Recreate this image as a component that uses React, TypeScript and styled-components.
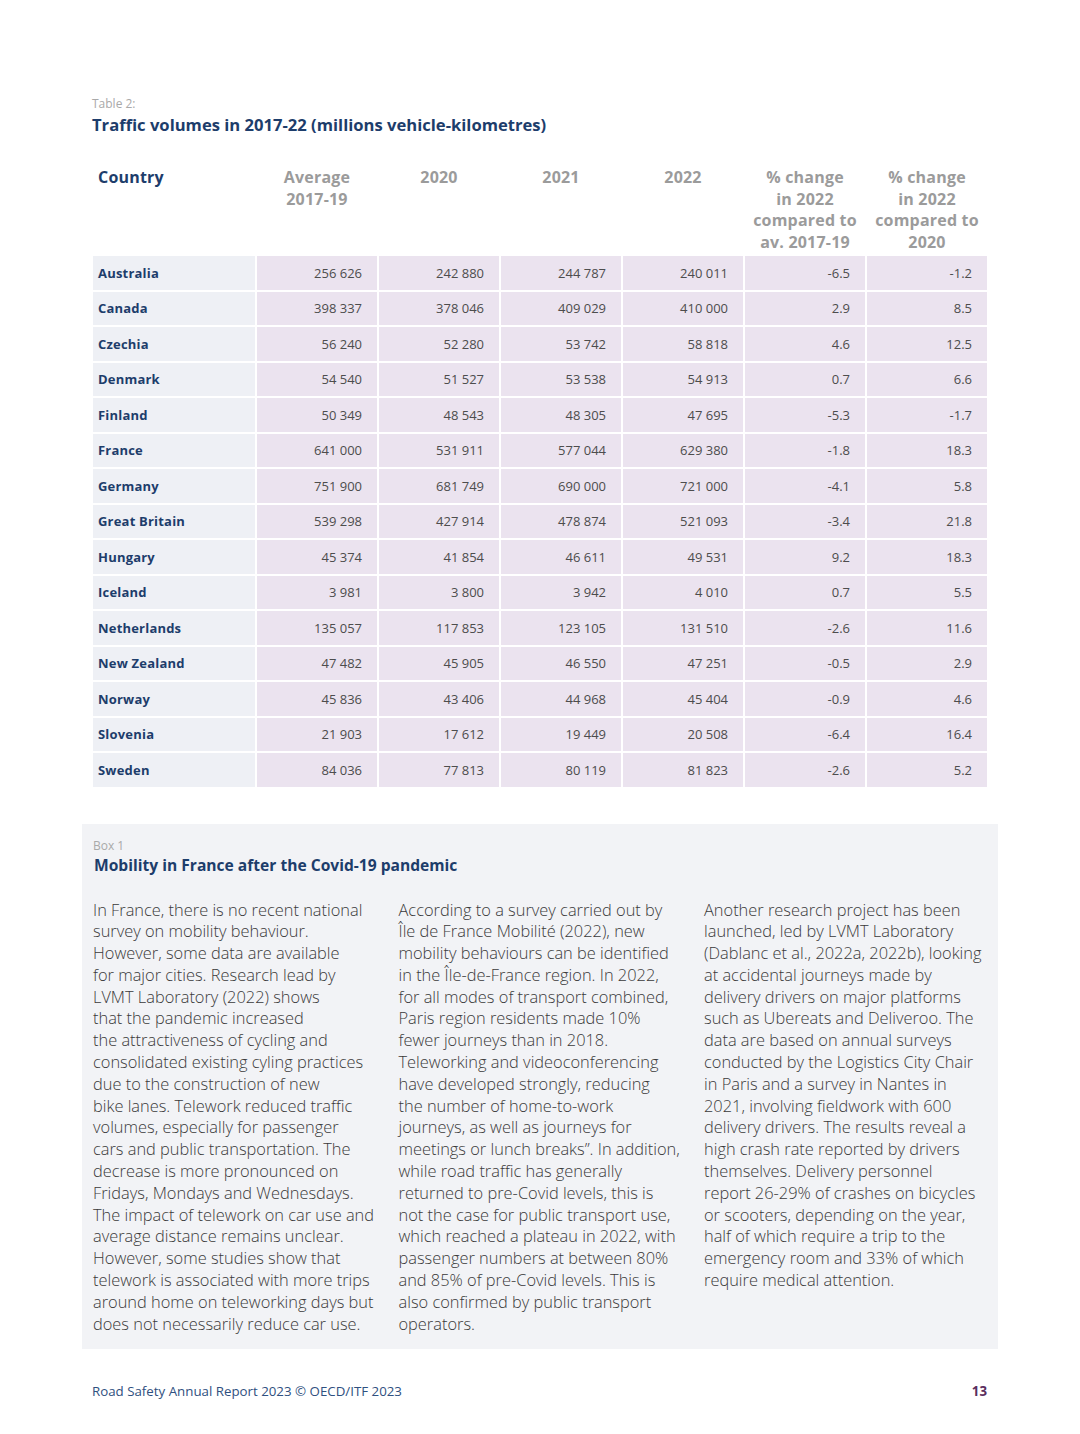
import React from "react";
import styled, { createGlobalStyle } from "styled-components";

const GlobalStyle = createGlobalStyle`
  html, body { margin: 0; padding: 0; background: #ffffff; }
  body { font-family: "Open Sans", "Noto Sans", sans-serif; }
`;

const Page = styled.div`
  width: 1080px;
  height: 1434px;
  box-sizing: border-box;
  padding-top: 96px;
  display: flex;
  flex-direction: column;
`;

const TableSection = styled.section`
  padding-left: 92px;
  display: flex;
  flex-direction: column;
`;

const Label = styled.div`
  font-size: 12px;
  line-height: 16px;
  color: #a9a9a9;
  font-weight: 400;
`;

const Title = styled.h2`
  margin: 2px 0 0 0;
  font-size: 16.6px;
  line-height: 22px;
  font-weight: 700;
  color: #1d3d6b;
`;

const Grid = styled.div`
  margin-top: 31px;
  margin-left: 1px;
  display: grid;
  grid-template-columns: 162px repeat(6, 120px);
  column-gap: 2px;
`;

const HeadCell = styled.div<{ $first?: boolean }>`
  font-size: 16px;
  line-height: 21.5px;
  font-weight: 700;
  color: ${(p) => (p.$first ? "#1d3d6b" : "#9b9b9b")};
  text-align: ${(p) => (p.$first ? "left" : "center")};
  padding-left: ${(p) => (p.$first ? "5px" : "0")};
  padding-bottom: 3px;
  letter-spacing: 0.2px;
`;

const Rows = styled.div`
  grid-column: 1 / -1;
  display: grid;
  grid-template-columns: subgrid;
  row-gap: 2px;
  grid-auto-rows: 33.5px;
`;

const CountryCell = styled.div`
  background: #eef0f5;
  display: flex;
  align-items: center;
  padding-left: 5px;
  font-size: 13px;
  font-weight: 700;
  color: #1d3d6b;
  letter-spacing: 0.2px;
`;

const ValueCell = styled.div`
  background: #ebe3ef;
  display: flex;
  align-items: center;
  justify-content: flex-end;
  padding-right: 15px;
  font-size: 13px;
  font-weight: 400;
  color: #4d4d4d;
`;

const Box = styled.section`
  margin: 37px 82px 0 82px;
  background: #f2f3f6;
  padding: 14px 5px 15px 11px;
  display: flex;
  flex-direction: column;
`;

const BoxTitle = styled.h3`
  margin: 0 0 0 1px;
  font-size: 15.6px;
  line-height: 22px;
  font-weight: 700;
  color: #1d3d6b;
`;

const Columns = styled.div`
  margin-top: 23px;
  display: grid;
  grid-template-columns: repeat(3, 290px);
  column-gap: 15.5px;
`;

const Para = styled.p`
  margin: 0;
  font-size: 16.4px;
  line-height: 21.8px;
  font-weight: 300;
  color: #3a3a3a;
  white-space: nowrap;
`;

const Footer = styled.footer`
  margin-top: 33px;
  padding: 0 93px 0 92px;
  display: flex;
  justify-content: space-between;
  align-items: center;
  font-size: 13.3px;
  line-height: 18px;
`;

const FooterText = styled.span`
  color: #2f5080;
  font-weight: 400;
`;

const PageNum = styled.span`
  color: #5a2e5e;
  font-weight: 700;
`;

const headers = [
  "Country",
  "Average\n2017-19",
  "2020",
  "2021",
  "2022",
  "% change\nin 2022\ncompared to\nav. 2017-19",
  "% change\nin 2022\ncompared to\n2020",
];

const rows: [string, string, string, string, string, string, string][] = [
  ["Australia", "256 626", "242 880", "244 787", "240 011", "-6.5", "-1.2"],
  ["Canada", "398 337", "378 046", "409 029", "410 000", "2.9", "8.5"],
  ["Czechia", "56 240", "52 280", "53 742", "58 818", "4.6", "12.5"],
  ["Denmark", "54 540", "51 527", "53 538", "54 913", "0.7", "6.6"],
  ["Finland", "50 349", "48 543", "48 305", "47 695", "-5.3", "-1.7"],
  ["France", "641 000", "531 911", "577 044", "629 380", "-1.8", "18.3"],
  ["Germany", "751 900", "681 749", "690 000", "721 000", "-4.1", "5.8"],
  ["Great Britain", "539 298", "427 914", "478 874", "521 093", "-3.4", "21.8"],
  ["Hungary", "45 374", "41 854", "46 611", "49 531", "9.2", "18.3"],
  ["Iceland", "3 981", "3 800", "3 942", "4 010", "0.7", "5.5"],
  ["Netherlands", "135 057", "117 853", "123 105", "131 510", "-2.6", "11.6"],
  ["New Zealand", "47 482", "45 905", "46 550", "47 251", "-0.5", "2.9"],
  ["Norway", "45 836", "43 406", "44 968", "45 404", "-0.9", "4.6"],
  ["Slovenia", "21 903", "17 612", "19 449", "20 508", "-6.4", "16.4"],
  ["Sweden", "84 036", "77 813", "80 119", "81 823", "-2.6", "5.2"],
];

const columnsText: string[][] = [
  [
    "In France, there is no recent national",
    "survey on mobility behaviour.",
    "However, some data are available",
    "for major cities. Research lead by",
    "LVMT Laboratory (2022) shows",
    "that the pandemic increased",
    "the attractiveness of cycling and",
    "consolidated existing cyling practices",
    "due to the construction of new",
    "bike lanes. Telework reduced traffic",
    "volumes, especially for passenger",
    "cars and public transportation. The",
    "decrease is more pronounced on",
    "Fridays, Mondays and Wednesdays.",
    "The impact of telework on car use and",
    "average distance remains unclear.",
    "However, some studies show that",
    "telework is associated with more trips",
    "around home on teleworking days but",
    "does not necessarily reduce car use.",
  ],
  [
    "According to a survey carried out by",
    "Île de France Mobilité (2022), new",
    "mobility behaviours can be identified",
    "in the Île-de-France region. In 2022,",
    "for all modes of transport combined,",
    "Paris region residents made 10%",
    "fewer journeys than in 2018.",
    "Teleworking and videoconferencing",
    "have developed strongly, reducing",
    "the number of home-to-work",
    "journeys, as well as journeys for",
    "meetings or lunch breaks\u201d. In addition,",
    "while road traffic has generally",
    "returned to pre-Covid levels, this is",
    "not the case for public transport use,",
    "which reached a plateau in 2022, with",
    "passenger numbers at between 80%",
    "and 85% of pre-Covid levels. This is",
    "also confirmed by public transport",
    "operators.",
  ],
  [
    "Another research project has been",
    "launched, led by LVMT Laboratory",
    "(Dablanc et al., 2022a, 2022b), looking",
    "at accidental journeys made by",
    "delivery drivers on major platforms",
    "such as Ubereats and Deliveroo. The",
    "data are based on annual surveys",
    "conducted by the Logistics City Chair",
    "in Paris and a survey in Nantes in",
    "2021, involving fieldwork with 600",
    "delivery drivers. The results reveal a",
    "high crash rate reported by drivers",
    "themselves. Delivery personnel",
    "report 26-29% of crashes on bicycles",
    "or scooters, depending on the year,",
    "half of which require a trip to the",
    "emergency room and 33% of which",
    "require medical attention.",
  ],
];

export default function App() {
  return (
    <>
      <GlobalStyle />
      <Page>
        <TableSection>
          <Label>Table 2:</Label>
          <Title>Traffic volumes in 2017-22 (millions vehicle-kilometres)</Title>
          <Grid>
            {headers.map((h, i) => (
              <HeadCell key={i} $first={i === 0}>
                {h.split("\n").map((line, j) => (
                  <div key={j}>{line}</div>
                ))}
              </HeadCell>
            ))}
            <Rows>
              {rows.map((r) => (
                <React.Fragment key={r[0]}>
                  <CountryCell>{r[0]}</CountryCell>
                  {r.slice(1).map((v, k) => (
                    <ValueCell key={k}>{v}</ValueCell>
                  ))}
                </React.Fragment>
              ))}
            </Rows>
          </Grid>
        </TableSection>
        <Box>
          <Label>Box 1</Label>
          <BoxTitle>Mobility in France after the Covid-19 pandemic</BoxTitle>
          <Columns>
            {columnsText.map((lines, i) => (
              <Para key={i}>
                {lines.map((l, j) => (
                  <React.Fragment key={j}>
                    {l}
                    {j < lines.length - 1 && <br />}
                  </React.Fragment>
                ))}
              </Para>
            ))}
          </Columns>
        </Box>
        <Footer>
          <FooterText>Road Safety Annual Report 2023 © OECD/ITF 2023</FooterText>
          <PageNum>13</PageNum>
        </Footer>
      </Page>
    </>
  );
}
